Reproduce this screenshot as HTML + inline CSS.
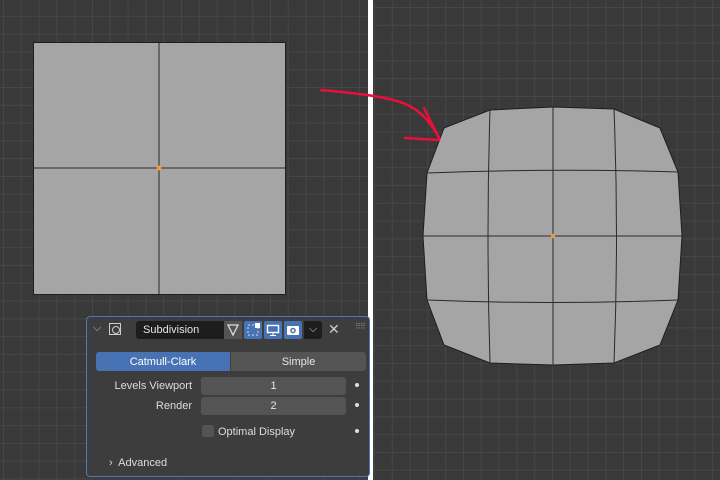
<!DOCTYPE html>
<html><head><meta charset="utf-8"><style>
body{margin:0;width:720px;height:480px;overflow:hidden;background:#fff;font-family:"Liberation Sans",sans-serif;position:relative}
.vp{position:absolute;top:0;height:480px;background-color:#393939;
background-image:linear-gradient(#464646 1px,transparent 1px),linear-gradient(90deg,#464646 1px,transparent 1px);background-size:17.8px 17.8px}
.panel{position:absolute;left:86px;top:316px;width:282px;height:159px;background:#3d3d3d;border:1px solid #4b78b8;border-radius:4px;color:#ddd;font-size:11px}
.a{position:absolute}
.fld{position:absolute;background:#545454;border-radius:3px;text-align:center;color:#e6e6e6;height:18px;line-height:19px}
.ib{position:absolute;top:4px;width:18px;height:18px;border-radius:2px}
.dot{position:absolute;width:4px;height:4px;border-radius:50%;background:#ddd}
</style></head><body>
<div class="vp" style="left:0;width:368px;background-position:3px -2px"></div>
<div class="vp" style="left:373px;width:347px;background-position:1px 7px"></div>
<svg class="a" style="left:0;top:0" width="720" height="480">
<rect x="33.5" y="42.5" width="252" height="252" fill="#a5a5a6" stroke="#1e1e1e"/>
<line x1="159" y1="43" x2="159" y2="294" stroke="#2a2a2a"/>
<line x1="34" y1="168" x2="285" y2="168" stroke="#2a2a2a"/>
<circle cx="159" cy="168" r="2.5" fill="#f09a3a"/>
<polygon points="490,110 553,107 614,109 660,128 678,172 682,236 678,300 660,345 614,363 553,365 490,363 444,345 427,300 423,236 427,173 444,128" fill="#a5a5a6" stroke="#1e1e1e"/>
<g stroke="#2a2a2a" fill="none">
<path d="M490,110 Q486,236 490,363"/><path d="M553,107 L553,365"/><path d="M614,109 Q619,236 614,363"/>
<path d="M427,173 Q553,168 678,172"/><path d="M423,236 L682,236"/><path d="M427,300 Q553,305 678,300"/>
</g>
<circle cx="553" cy="236" r="2.2" fill="#f09a3a"/>
<g stroke="#e8103a" stroke-width="2.5" fill="none" stroke-linecap="round">
<path d="M321,90 Q380,95 400,102 Q425,110 439,138"/>
<path d="M424,108 L439,138"/><path d="M405,138 L439,140"/>
</g>
</svg>
<div class="panel">
<div class="a" style="left:6px;top:5px;color:#bbb;font-size:11px">⌵</div>
<div class="a" style="left:22px;top:6px;width:12px;height:12px;border:1px solid #ccc;box-sizing:border-box"><div style="margin:2px;width:6px;height:6px;border:1px solid #ccc;border-radius:50%"></div></div>
<div class="a" style="left:49px;top:4px;width:88px;height:18px;background:#1d1d1d;border-radius:3px 0 0 3px;line-height:19px;padding-left:7px;box-sizing:border-box;color:#e6e6e6">Subdivision</div>
<div class="ib" style="left:137px;background:#545454;border-radius:0"><svg width="18" height="18"><path d="M4,4 L14,4 L9,14 Z" fill="none" stroke="#ddd" stroke-width="1.3"/></svg></div>
<div class="ib" style="left:157px;background:#4772b3"><svg width="18" height="18"><rect x="4" y="4" width="10" height="10" fill="none" stroke="#ddd" stroke-dasharray="2 2"/><rect x="11" y="2" width="5" height="5" fill="#fff"/></svg></div>
<div class="ib" style="left:177px;background:#4772b3"><svg width="18" height="18"><rect x="3.5" y="4.5" width="11" height="7" fill="none" stroke="#fff" stroke-width="1.4"/><path d="M9,12 V14 M6,14.5 H12" stroke="#fff"/></svg></div>
<div class="ib" style="left:197px;background:#4772b3"><svg width="18" height="18"><rect x="3" y="5" width="12" height="9" rx="1" fill="#fff"/><circle cx="9" cy="9.5" r="2.8" fill="#4772b3"/><circle cx="9" cy="9.5" r="1.3" fill="#fff"/></svg></div>
<div class="a" style="left:217px;top:4px;width:18px;height:18px;background:#1d1d1d;border-radius:0 3px 3px 0;color:#ccc;text-align:center;line-height:16px">⌵</div>
<div class="a" style="left:241px;top:4px;color:#ccc;font-size:14px">✕</div>
<div class="a" style="left:268px;top:5px;color:#888;font-size:8px;letter-spacing:-1px">⠿⠿</div>
<div class="a" style="left:9px;top:35px;width:134px;height:19px;background:#4772b3;border-radius:3px 0 0 3px;text-align:center;line-height:20px;color:#fff">Catmull-Clark</div>
<div class="a" style="left:144px;top:35px;width:135px;height:19px;background:#545454;border-radius:0 3px 3px 0;text-align:center;line-height:20px;color:#e6e6e6">Simple</div>
<div class="a" style="left:0;width:105px;top:63px;text-align:right">Levels Viewport</div>
<div class="a" style="left:0;width:105px;top:83px;text-align:right">Render</div>
<div class="fld" style="left:114px;top:60px;width:145px">1</div>
<div class="fld" style="left:114px;top:80px;width:145px">2</div>
<div class="dot" style="left:268px;top:66px"></div>
<div class="dot" style="left:268px;top:86px"></div>
<div class="a" style="left:115px;top:108px;width:12px;height:12px;background:#545454;border-radius:2px"></div>
<div class="a" style="left:131px;top:109px">Optimal Display</div>
<div class="dot" style="left:268px;top:112px"></div>
<div class="a" style="left:22px;top:140px">›&nbsp; Advanced</div>
</div>
</body></html>
